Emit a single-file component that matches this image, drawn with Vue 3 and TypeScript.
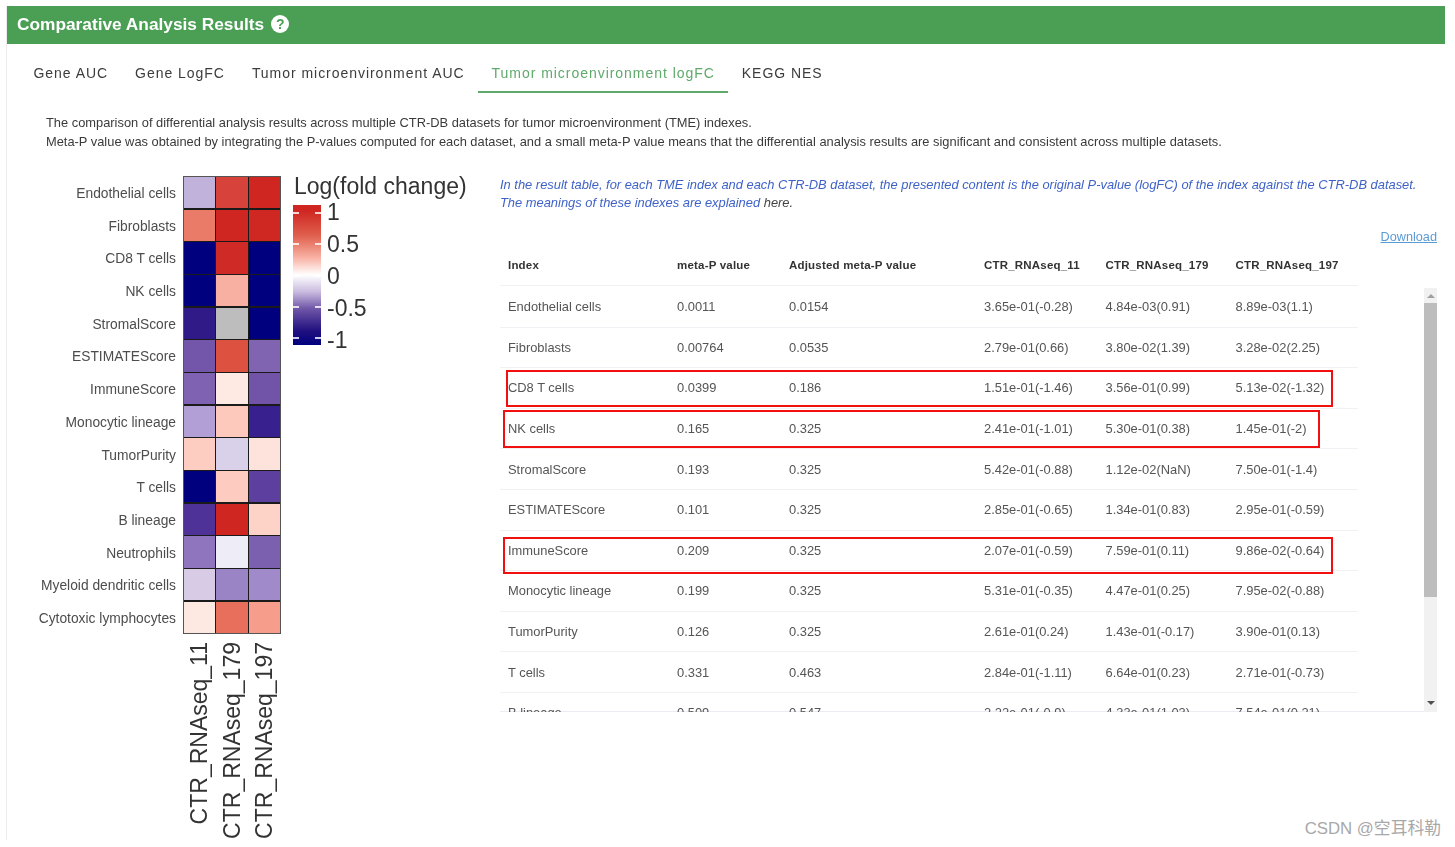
<script setup lang="ts">
const tabs = ['Gene AUC', 'Gene LogFC', 'Tumor microenvironment AUC', 'Tumor microenvironment logFC', 'KEGG NES']
const activeTab = 3

const heat: { label: string; colors: string[] }[] = [
  { label: 'Endothelial cells', colors: ['#c1b2dc', '#d7433a', '#cf2622'] },
  { label: 'Fibroblasts', colors: ['#ea7b68', '#cf2622', '#cf2823'] },
  { label: 'CD8 T cells', colors: ['#00007f', '#cf2a26', '#00007f'] },
  { label: 'NK cells', colors: ['#00007f', '#f8b0a2', '#00007f'] },
  { label: 'StromalScore', colors: ['#2f1a87', '#bdbdbd', '#00007f'] },
  { label: 'ESTIMATEScore', colors: ['#7356a9', '#dc5140', '#8063b1'] },
  { label: 'ImmuneScore', colors: ['#7f62b2', '#fee9e3', '#7154a8'] },
  { label: 'Monocytic lineage', colors: ['#b29fd5', '#fdc9bd', '#38208e'] },
  { label: 'TumorPurity', colors: ['#fdcdc2', '#d9d0ea', '#fee3dc'] },
  { label: 'T cells', colors: ['#00007f', '#fdcbc0', '#5d3fa0'] },
  { label: 'B lineage', colors: ['#4e3298', '#cf2622', '#fdd2c7'] },
  { label: 'Neutrophils', colors: ['#8e75bd', '#eeecf7', '#7c60b0'] },
  { label: 'Myeloid dendritic cells', colors: ['#d8cbe6', '#9a84c6', '#a08ac9'] },
  { label: 'Cytotoxic lymphocytes', colors: ['#fee8e2', '#e86f5c', '#f69d8c'] },
]
const datasets = ['CTR_RNAseq_11', 'CTR_RNAseq_179', 'CTR_RNAseq_197']
const legendTicks = ['1', '0.5', '0', '-0.5', '-1']

const colWidths = [169, 112, 195, 121.5, 130, 130.5]
const headers = ['Index', 'meta-P value', 'Adjusted meta-P value', ...datasets]
const rows: string[][] = [
  ['Endothelial cells', '0.0011', '0.0154', '3.65e-01(-0.28)', '4.84e-03(0.91)', '8.89e-03(1.1)'],
  ['Fibroblasts', '0.00764', '0.0535', '2.79e-01(0.66)', '3.80e-02(1.39)', '3.28e-02(2.25)'],
  ['CD8 T cells', '0.0399', '0.186', '1.51e-01(-1.46)', '3.56e-01(0.99)', '5.13e-02(-1.32)'],
  ['NK cells', '0.165', '0.325', '2.41e-01(-1.01)', '5.30e-01(0.38)', '1.45e-01(-2)'],
  ['StromalScore', '0.193', '0.325', '5.42e-01(-0.88)', '1.12e-02(NaN)', '7.50e-01(-1.4)'],
  ['ESTIMATEScore', '0.101', '0.325', '2.85e-01(-0.65)', '1.34e-01(0.83)', '2.95e-01(-0.59)'],
  ['ImmuneScore', '0.209', '0.325', '2.07e-01(-0.59)', '7.59e-01(0.11)', '9.86e-02(-0.64)'],
  ['Monocytic lineage', '0.199', '0.325', '5.31e-01(-0.35)', '4.47e-01(0.25)', '7.95e-02(-0.88)'],
  ['TumorPurity', '0.126', '0.325', '2.61e-01(0.24)', '1.43e-01(-0.17)', '3.90e-01(0.13)'],
  ['T cells', '0.331', '0.463', '2.84e-01(-1.11)', '6.64e-01(0.23)', '2.71e-01(-0.73)'],
  ['B lineage', '0.509', '0.547', '2.22e-01(-0.9)', '4.33e-01(1.03)', '7.54e-01(0.21)'],
]
</script>

<template>
  <div class="page">
    <section class="card">
      <header class="bar">
        <h1 class="bar-title">Comparative Analysis Results</h1>
        <span class="help">?</span>
      </header>

      <nav class="tabs">
        <span
          v-for="(t, i) in tabs"
          :key="t"
          class="tab"
          :class="{ active: i === activeTab }"
        >{{ t }}</span>
      </nav>

      <div class="intro">
        <p>The comparison of differential analysis results across multiple CTR-DB datasets for tumor microenvironment (TME) indexes.</p>
        <p>Meta-P value was obtained by integrating the P-values computed for each dataset, and a small meta-P value means that the differential analysis results are significant and consistent across multiple datasets.</p>
      </div>

      <div class="main">
        <div class="figure">
          <div class="labels">
            <span v-for="r in heat" :key="r.label" class="row-label">{{ r.label }}</span>
          </div>
          <div class="heat-col">
            <div class="heat">
              <template v-for="r in heat" :key="r.label">
                <i v-for="(c, j) in r.colors" :key="j" class="cell" :style="{ background: c }"></i>
              </template>
            </div>
            <div class="xlabels">
              <span v-for="d in datasets" :key="d" class="xlabel">{{ d }}</span>
            </div>
          </div>
          <div class="legend">
            <div class="legend-title">Log(fold change)</div>
            <div class="legend-body">
              <div class="ramp">
                <b v-for="t in legendTicks" :key="t" class="tick"></b>
              </div>
              <div class="ticks">
                <span v-for="t in legendTicks" :key="t">{{ t }}</span>
              </div>
            </div>
          </div>
        </div>

        <div class="results">
          <p class="note">In the result table, for each TME index and each CTR-DB dataset, the presented content is the original P-value (logFC) of the index against the CTR-DB dataset.<br>The meanings of these indexes are explained <span class="here">here.</span></p>
          <div class="download-row"><a class="download">Download</a></div>

          <table class="tbl head">
            <colgroup><col v-for="(w, i) in colWidths" :key="i" :style="{ width: w + 'px' }"></colgroup>
            <thead>
              <tr><th v-for="h in headers" :key="h">{{ h }}</th></tr>
            </thead>
          </table>

          <div class="scroll">
            <table class="tbl body">
              <colgroup><col v-for="(w, i) in colWidths" :key="i" :style="{ width: w + 'px' }"></colgroup>
              <tbody>
                <tr v-for="r in rows" :key="r[0]">
                  <td v-for="(c, i) in r" :key="i">{{ c }}</td>
                </tr>
              </tbody>
            </table>
            <div class="scrollbar">
              <span class="arrow up"></span>
              <span class="thumb"></span>
              <span class="arrow down"></span>
            </div>
            <div class="mark m1"></div>
            <div class="mark m2"></div>
            <div class="mark m3"></div>
          </div>
        </div>
      </div>
    </section>
    <div class="watermark">CSDN @空耳科勒</div>
  </div>
</template>

<style>
html, body { margin: 0; background: #fff; }
</style>

<style scoped>
.page {
  position: relative;
  width: 1455px;
  height: 847px;
  overflow: hidden;
  padding: 6px 10px 0 6px;
  box-sizing: border-box;
  background: #fff;
  font-family: "Liberation Sans", Arial, sans-serif;
}
.card {
  height: 834px;
  border-left: 1px solid #ececec;
  filter: blur(0.5px);
}
.bar {
  height: 38px;
  padding: 0 0 2px 10px;
  box-sizing: border-box;
  background: #4a9f55;
  display: flex;
  align-items: center;
  gap: 7px;
}
.bar-title {
  margin: 0;
  color: #fff;
  font-size: 17.3px;
  font-weight: 700;
}
.help {
  width: 18px;
  height: 18px;
  border-radius: 50%;
  background: #fff;
  color: #4a9f55;
  font-size: 14px;
  font-weight: 700;
  line-height: 18px;
  text-align: center;
}
.tabs {
  display: flex;
  height: 49px;
  padding-left: 13px;
}
.tab {
  padding: 0 13.5px;
  height: 49px;
  line-height: 58px;
  box-sizing: border-box;
  font-size: 14px;
  letter-spacing: .96px;
  color: #3c3c3c;
  white-space: nowrap;
}
.tab.active {
  color: #5fa96b;
  border-bottom: 2px solid #5fa96b;
}
.intro {
  margin: 20px 0 0 39px;
  font-size: 12.87px;
  line-height: 19px;
  color: #3a3a3a;
}
.intro p { margin: 0; white-space: nowrap; }
.main {
  display: flex;
  margin-top: 25px;
}
.figure {
  width: 493px;
  flex: none;
  display: flex;
  align-items: flex-start;
}
.labels {
  width: 169px;
  flex: none;
  padding: 1px 7px 0 0;
  display: grid;
  grid-auto-rows: 32.7px;
}
.row-label {
  text-align: right;
  font-size: 13.8px;
  line-height: 33px;
  color: #4d4d4d;
  white-space: nowrap;
}
.heat-col { width: 98px; flex: none; }
.heat {
  display: grid;
  grid-template-columns: repeat(3, 1fr);
  grid-template-rows: repeat(14, 1fr);
  border: 1px solid #555;
  box-sizing: border-box;
  width: 98px;
  height: 458px;
  background: #1a1a1a;
  gap: 1.4px;
}
.cell { display: block; }
.xlabels {
  display: grid;
  grid-template-columns: repeat(3, 1fr);
  margin-top: 8px;
}
.xlabel {
  writing-mode: vertical-rl;
  transform: rotate(180deg);
  font-size: 23px;
  line-height: 32.7px;
  color: #333;
  white-space: nowrap;
  justify-self: center;
  align-self: start;
}
.legend {
  margin: -4px 0 0 12px;
  flex: none;
}
.legend-title {
  font-size: 23px;
  line-height: 28px;
  color: #333;
  margin-left: 1px;
  white-space: nowrap;
}
.legend-body { display: flex; margin-top: 5px; }
.ramp {
  width: 28px;
  height: 140px;
  display: flex;
  flex-direction: column;
  justify-content: space-between;
  padding: 7px 0 6px;
  box-sizing: border-box;
  background: linear-gradient(to bottom, #cf2622 0%, #cf2622 4%, #e0604e 22%, #f9b4a6 38%, #ffffff 50%, #c9bbdf 62%, #7056a8 74%, #20107f 90%, #00007f 100%);
}
.tick {
  display: block;
  height: 2px;
  background: linear-gradient(to right, #fff 0, #fff 6px, transparent 6px, transparent 22px, #fff 22px);
  opacity: .8;
}
.ticks {
  margin-left: 6px;
  height: 140px;
  display: flex;
  flex-direction: column;
  justify-content: space-between;
  font-size: 23px;
  color: #333;
}
.ticks span { line-height: 32px; height: 32px; margin-top: -9px; margin-bottom: -11px; }
.results { width: 937px; flex: none; }
.note {
  margin: 0;
  font-size: 12.9px;
  line-height: 18px;
  font-style: italic;
  color: #3f62c8;
  white-space: nowrap;
}
.here { color: #444; }
.download-row {
  text-align: right;
  margin-top: 15px;
  height: 17px;
  line-height: 17px;
}
.download {
  font-size: 12.7px;
  color: #5b9bd5;
  text-decoration: underline;
}
.tbl {
  table-layout: fixed;
  border-collapse: collapse;
  width: 858px;
}
th {
  height: 41px;
  padding: 0 0 0 8px;
  text-align: left;
  font-size: 11.5px;
  font-weight: 700;
  color: #333;
  letter-spacing: .2px;
  white-space: nowrap;
  border-bottom: 1px solid #f0f0f5;
}
td {
  height: 39.6px;
  padding: 0 0 0 8px;
  font-size: 12.9px;
  color: #555;
  white-space: nowrap;
  border-bottom: 1px solid #f0f0f5;
}
.tbl.body { margin-top: 1px; }
.scroll {
  position: relative;
  height: 426px;
  overflow: hidden;
  width: 937px;
  box-shadow: inset 0 -1px 0 #ececf2;
}
.scrollbar {
  position: absolute;
  right: 0;
  top: 2px;
  bottom: 0;
  width: 13px;
  background: #f1f1f1;
  display: flex;
  flex-direction: column;
  align-items: center;
}
.thumb {
  width: 13px;
  height: 294px;
  background: #bdbdbd;
}
.arrow {
  display: block;
  width: 0;
  height: 0;
  border-left: 4px solid transparent;
  border-right: 4px solid transparent;
}
.arrow.up {
  border-bottom: 4px solid #a0a0a0;
  margin: 6px 0 5px;
}
.arrow.down {
  border-top: 4px solid #505050;
  margin-top: 104px;
}
.mark {
  position: absolute;
  border: 2px solid #f01010;
  box-sizing: border-box;
}
.m1 { left: 6px; top: 84px; width: 827px; height: 37px; }
.m2 { left: 3px; top: 124px; width: 817px; height: 38px; }
.m3 { left: 3px; top: 251px; width: 830px; height: 37px; }
.watermark {
  position: absolute;
  right: 14px;
  bottom: 8px;
  font-family: "Liberation Sans", "Noto Sans CJK SC", sans-serif;
  font-size: 16.8px;
  color: #a8a8a8;
  white-space: nowrap;
}
</style>
